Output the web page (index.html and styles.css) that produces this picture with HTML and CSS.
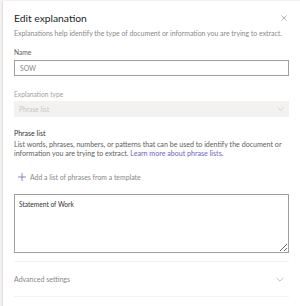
FILE: index.html
```html
<!DOCTYPE html>
<html lang="en">
<head>
  <meta charset="UTF-8" />
  <title>Edit explanation</title>
  <link rel="stylesheet" href="styles.css">
</head>
<body>
  <!-- Edit explanation panel -->
  <div class="panel">
    <div class="panel-head">
      <h1>Edit explanation</h1>
      <svg class="close" viewBox="0 0 6 6" width="6" height="6"><path d="M0.5 0.5 L5.5 5.5 M5.5 0.5 L0.5 5.5" stroke="currentColor" stroke-width="0.8"/></svg>
    </div>
    <p class="sub">Explanations help identify the type of document or information you are trying to extract.</p>

    <div class="field">
      <label>Name</label>
      <div class="input">SOW</div>
    </div>

    <div class="field disabled">
      <label>Explanation type</label>
      <div class="select">
        <span>Phrase list</span>
        <svg class="chev" viewBox="0 0 12 7" width="7" height="4"><path d="M1 1 L6 6 L11 1" fill="none" stroke="currentColor" stroke-width="1.2"/></svg>
      </div>
    </div>

    <div class="section">
      <h2>Phrase list</h2>
      <p class="desc">List words, phrases, numbers, or patterns that can be used to identify the document or information you are trying to extract. <a href="#">Learn more about phrase lists.</a></p>
    </div>

    <div class="add">
      <svg viewBox="0 0 8 8" width="8" height="8"><path d="M4 0 V8 M0 4 H8" stroke="currentColor" stroke-width="0.8"/></svg>
      <span>Add a list of phrases from a template</span>
    </div>

    <textarea class="textarea" readonly>Statement of Work</textarea>

    <div class="advanced">
      <span>Advanced settings</span>
      <svg class="chev" viewBox="0 0 12 7" width="8" height="5"><path d="M1 1 L6 6 L11 1" fill="none" stroke="currentColor" stroke-width="1"/></svg>
    </div>
  </div>
</body>
</html>
```

FILE: styles.css
```css
* {
  box-sizing: border-box;
  margin: 0;
  padding: 0;
}

html, body {
  font-family: 'Lato', 'Liberation Sans', sans-serif;
  color: #323130;
}

body {
  background: #f3f2f1;
  padding: 1px 0 0 2px;
}

.panel {
  background: #fff;
  border-left: 1px solid #e1dfdd;
  height: 305px;
  padding: 10px 11px 0 11px;
}

.panel-head {
  display: flex;
  justify-content: space-between;
  align-items: center;
  height: 14px;
}

.panel-head h1 {
  font-size: 10.3px;
  font-weight: 400;
  color: #201f1e;
  line-height: 14px;
}

.close {
  color: #a19f9d;
  margin-right: 2px;
}

.sub {
  font-size: 6.95px;
  color: #8a8886;
  line-height: 9px;
  margin-top: 3.5px;
  white-space: nowrap;
}

.field {
  margin-top: 10px;
}

.field label {
  display: block;
  font-size: 6.7px;
  color: #605e5c;
  line-height: 9px;
  margin-bottom: 3.5px;
}

.input {
  border: 1px solid #a19f9d;
  height: 16px;
  font-size: 6.7px;
  color: #8a8886;
  padding: 0 5px;
  display: flex;
  align-items: center;
}

.field.disabled {
  margin-top: 13.5px;
}

.field.disabled label {
  color: #a19f9d;
  margin-bottom: 2.5px;
}

.select {
  background: #f3f2f1;
  height: 16px;
  font-size: 6.7px;
  color: #c8c6c4;
  padding: 0 5px;
  display: flex;
  align-items: center;
  justify-content: space-between;
}

.select .chev {
  color: #c8c6c4;
}

.section {
  margin-top: 11.5px;
}

.section h2 {
  font-size: 7px;
  font-weight: 400;
  color: #323130;
  line-height: 9px;
}

.desc {
  font-size: 7.1px;
  color: #605e5c;
  line-height: 9px;
  margin-top: 2px;
}

.desc a {
  color: #7160c8;
  text-decoration: none;
}

.add {
  display: flex;
  align-items: center;
  gap: 4px;
  height: 9px;
  margin-top: 15px;
  padding-left: 4px;
  font-size: 6.9px;
  color: #8a8886;
}

.add svg {
  color: #7160c8;
}

.textarea {
  display: block;
  width: 100%;
  border: 1px solid #a19f9d;
  height: 59px;
  margin-top: 12.5px;
  font-family: 'Lato', 'Liberation Sans', sans-serif;
  font-size: 6.6px;
  line-height: 9px;
  color: #323130;
  padding: 5px 4px;
  outline: none;
  resize: vertical;
}

.advanced {
  border-top: 1px solid #f5f3ee;
  border-bottom: 1px solid #f5f3ee;
  margin-top: 8px;
  height: 36px;
  display: flex;
  align-items: center;
  justify-content: space-between;
  font-size: 7px;
  color: #8a8886;
  padding-right: 5px;
}

.advanced .chev {
  color: #a19f9d;
}
```
